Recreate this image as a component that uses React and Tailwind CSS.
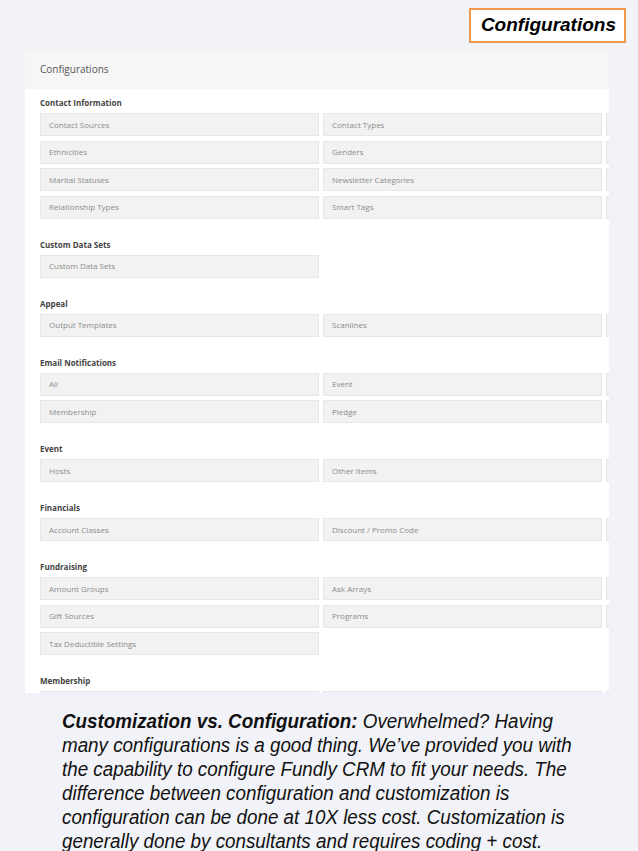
import React from "react";

const sections = [
  { title: "Contact Information", rows: [["Contact Sources", "Contact Types"], ["Ethnicities", "Genders"], ["Marital Statuses", "Newsletter Categories"], ["Relationship Types", "Smart Tags"]] },
  { title: "Custom Data Sets", rows: [["Custom Data Sets"]] },
  { title: "Appeal", rows: [["Output Templates", "Scanlines"]] },
  { title: "Email Notifications", rows: [["All", "Event"], ["Membership", "Pledge"]] },
  { title: "Event", rows: [["Hosts", "Other Items"]] },
  { title: "Financials", rows: [["Account Classes", "Discount / Promo Code"]] },
  { title: "Fundraising", rows: [["Amount Groups", "Ask Arrays"], ["Gift Sources", "Programs"], ["Tax Deductible Settings"]] },
  { title: "Membership", rows: [["", ""]] },
];

const lines = [
  null,
  "many configurations is a good thing. We’ve provided you with",
  "the capability to configure Fundly CRM to fit your needs. The",
  "difference between configuration and customization is",
  "configuration can be done at 10X less cost. Customization is",
  "generally done by consultants and requires coding + cost.",
];

function Cell({ label }) {
  return (
    <div className="h-[23px] bg-[#f2f2f2] border border-[#e7e7e7] flex items-center pl-[8px] text-[8px] text-[#8c8c8c] whitespace-nowrap overflow-hidden">
      {label}
    </div>
  );
}

export default function App() {
  return (
    <div className="w-[638px] h-[851px] bg-[#f2f3f8] overflow-hidden relative" style={{ fontFamily: "'Open Sans', 'Noto Sans', sans-serif" }}>
      <div className="flex justify-end pt-[8px] pr-[12px]">
        <div className="w-[157px] h-[35px] bg-white border-2 border-[#f0994c] flex items-center justify-end pr-[8px]">
          <span className="text-[19px] font-bold italic text-black" style={{ fontFamily: "'Liberation Sans', Arial, sans-serif" }}>Configurations</span>
        </div>
      </div>
      <div className="ml-[25px] mt-[7px] w-[584px] h-[643px] flex flex-col overflow-hidden">
        <div className="h-[39px] shrink-0 bg-[#f6f6f7] flex items-center pl-[15px] text-[10px] text-[#555]">Configurations</div>
        <div className="flex-1 bg-white pl-[15px] pt-[8px] overflow-hidden">
          {sections.map((s) => (
            <div key={s.title} className="mb-[20px]">
              <div className="h-[12px] flex items-center text-[8px] font-bold text-[#444] mb-[4px]">{s.title}</div>
              <div className="flex flex-col gap-y-[4.5px]">
                {s.rows.map((r, i) => (
                  <div key={i} className="grid grid-cols-[279px_279px_279px] gap-x-[4px]">
                    <Cell label={r[0]} />
                    {r.length > 1 ? <Cell label={r[1]} /> : <div />}
                    {r.length > 1 ? <Cell label="" /> : <div />}
                  </div>
                ))}
              </div>
            </div>
          ))}
        </div>
      </div>
      <div className="ml-[62px] mt-[16px] w-[600px] origin-left scale-x-[0.94] text-[20px] leading-[24px] italic text-[#111]" style={{ fontFamily: "'Liberation Sans', Arial, sans-serif" }}>
        {lines.map((l, i) => (
          <div key={i} className="whitespace-nowrap">
            {i === 0 ? (
              <>
                <span className="font-bold">Customization vs. Configuration:</span> Overwhelmed? Having
              </>
            ) : (
              l
            )}
          </div>
        ))}
      </div>
    </div>
  );
}
